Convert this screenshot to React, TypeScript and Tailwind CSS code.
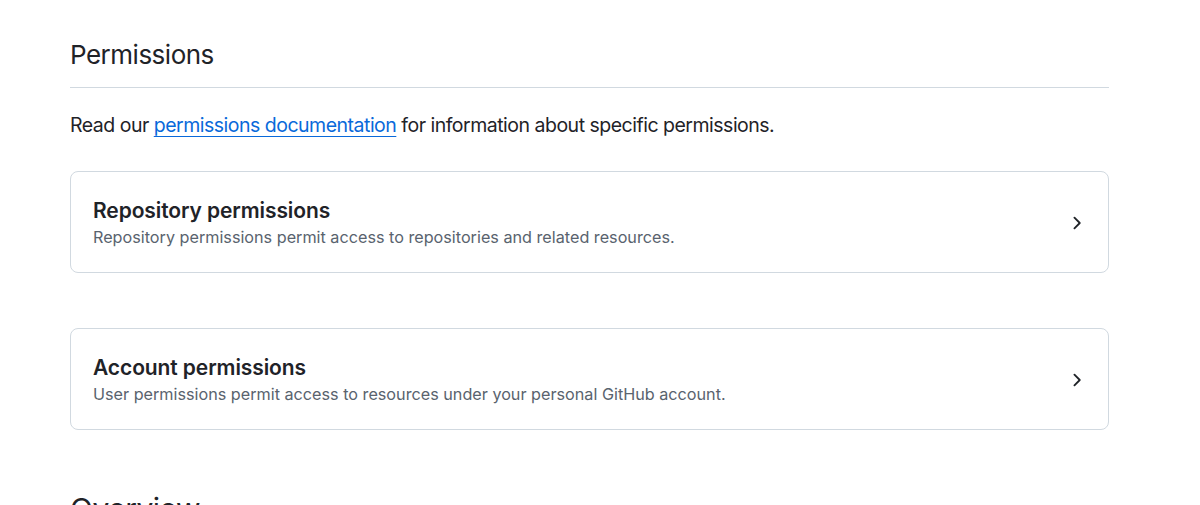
const font = { fontFamily: "Inter, 'Noto Sans', sans-serif" }

function ChevronRightIcon() {
  return (
    <svg viewBox="0 0 16 16" width="20" height="20" fill="#1f2328" aria-hidden="true">
      <path d="M6.22 3.22a.75.75 0 0 1 1.06 0l4.25 4.25a.75.75 0 0 1 0 1.06l-4.25 4.25a.751.751 0 0 1-1.042-.018.751.751 0 0 1-.018-1.042L9.94 8 6.22 4.28a.75.75 0 0 1 0-1.06Z" />
    </svg>
  )
}

function PermissionCard({ title, description }: { title: string; description: string }) {
  return (
    <button
      type="button"
      className="flex w-full items-center justify-between rounded-[8px] border border-[#d1d9e0] bg-white px-[22px] pt-[25px] pb-[23px] text-left"
    >
      <div className="flex flex-col">
        <span className="text-[21px] font-semibold leading-[28px] tracking-[-0.1px] text-[#1f2328]">{title}</span>
        <span className="text-[16.2px] leading-[24px] text-[#59636e]">{description}</span>
      </div>
      <ChevronRightIcon />
    </button>
  )
}

export default function App() {
  return (
    <div className="min-h-screen bg-white" style={font}>
      <div className="ml-[70px] w-[1039px] pt-[37px]">
        <h2 className="border-b border-[#d1d9e0] pb-[14px] text-[26px] font-normal leading-[36px] tracking-[-0.5px] text-[#1f2328]">
          Permissions
        </h2>
        <p className="mt-[22px] text-[19.5px] leading-[30px] tracking-[-0.5px] text-[#1f2328]">
          Read our{" "}
          <a href="#" className="text-[#0969da] underline decoration-1 underline-offset-[4px]">
            permissions documentation
          </a>{" "}
          for information about specific permissions.
        </p>
        <div className="mt-[31px] flex flex-col gap-[55px]">
          <PermissionCard
            title="Repository permissions"
            description="Repository permissions permit access to repositories and related resources."
          />
          <PermissionCard
            title="Account permissions"
            description="User permissions permit access to resources under your personal GitHub account."
          />
        </div>
        <h2 className="mt-[61px] text-[30px] font-normal leading-[36px] tracking-[-0.5px] text-[#1f2328]">Overview</h2>
      </div>
    </div>
  )
}
